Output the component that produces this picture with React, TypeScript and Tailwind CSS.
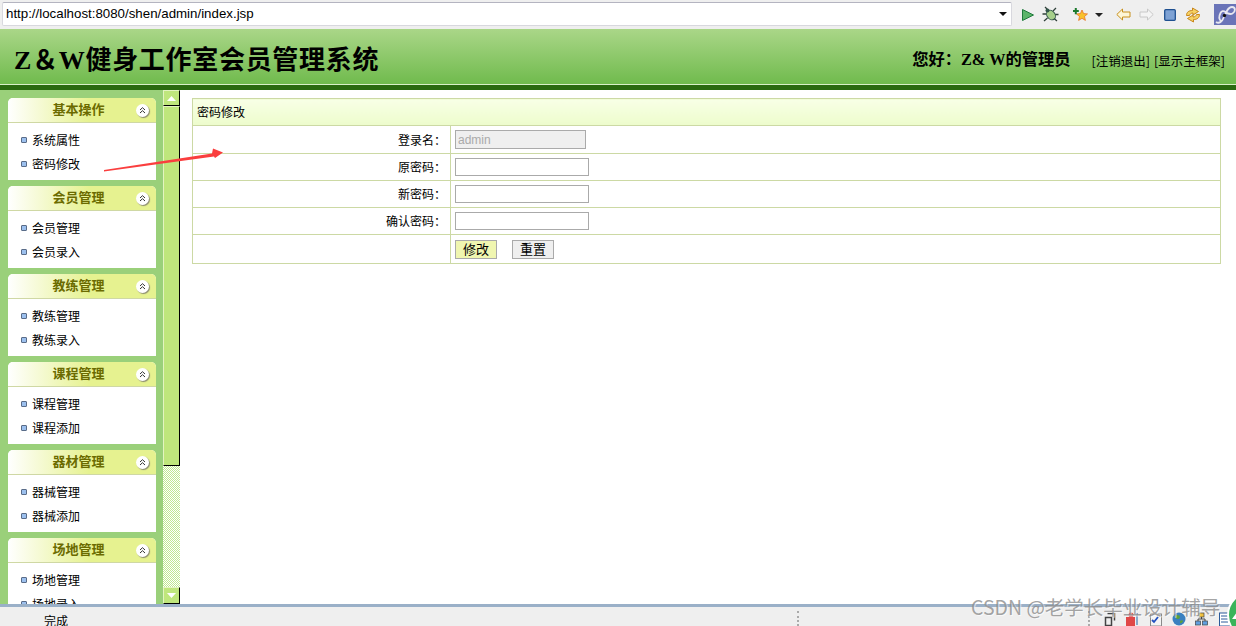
import React from 'react';

const menus = [
  { title: '基本操作', items: ['系统属性', '密码修改'] },
  { title: '会员管理', items: ['会员管理', '会员录入'] },
  { title: '教练管理', items: ['教练管理', '教练录入'] },
  { title: '课程管理', items: ['课程管理', '课程添加'] },
  { title: '器材管理', items: ['器械管理', '器械添加'] },
  { title: '场地管理', items: ['场地管理', '场地录入'] },
];

const fields = ['原密码：', '新密码：', '确认密码：'];

const cellBorder = 'border border-[#ccd9a4]';
const scrollPiece = 'shrink-0 bg-[#bfe67c] border border-t-[#e4f4c0] border-l-[#e4f4c0] border-r-black border-b-black';

const Toolbar = () => (
  <div className="h-[29px] shrink-0 flex items-start bg-[#efefef] pl-[2px]">
    <div className="mt-[2px] w-[1010px] h-[24px] bg-white border border-[#d8d8de] border-t-[#b4b4c0] rounded-[2px] flex items-center pl-[3px] pr-[4px] justify-between">
      <span className="text-[13.3px] text-black font-['Liberation_Sans',sans-serif]">http://localhost:8080/shen/admin/index.jsp</span>
      <svg width="8" height="4" viewBox="0 0 8 4"><path d="M0 0h8L4 4z" fill="#111" /></svg>
    </div>
    <div className="flex items-center h-[29px]">
      {/* run */}
      <svg className="ml-[9px]" width="14" height="14" viewBox="0 0 14 14"><path d="M1.500 1.500v11L12.500 7z" fill="#5cb56a" stroke="#1f7a3c" /></svg>
      {/* debug */}
      <svg className="ml-[7px]" width="17" height="17" viewBox="0 0 17 17">
        <path d="M3 1l3.500 3.500M14 2l-3 3M.5 8h4M16.500 8.500h-4M2 15l3.500-3M15 15l-3.500-3" stroke="#30403a" strokeWidth="1.300" fill="none" />
        <ellipse cx="9" cy="9" rx="4" ry="5.200" transform="rotate(-35 9 9)" fill="#a6cf8a" stroke="#33564a" />
        <circle cx="5.500" cy="4.500" r="2" fill="#33564a" />
      </svg>
      {/* new + star */}
      <svg className="ml-[13px]" width="16" height="16" viewBox="0 0 16 16">
        <path d="M10 3l1.600 3.600 3.900.3-3 2.600.9 3.900L10 11.300 6.600 13.400l.9-3.900-3-2.600 3.900-.3z" fill="#f8c22c" stroke="#e8742a" strokeWidth="0.800" />
        <path d="M3.800 1v6.200M1 4h5.800" stroke="#1c7a2c" strokeWidth="2" />
      </svg>
      <svg className="ml-[7px]" width="8" height="4" viewBox="0 0 8 4"><path d="M0 0h8L4 4z" fill="#222" /></svg>
      {/* back / forward */}
      <svg className="ml-[13px]" width="15" height="13" viewBox="0 0 15 13"><path d="M.8 6.500L6.500 1v3h7.500v5H6.500v3z" fill="#fdf6d8" stroke="#c8901c" /></svg>
      <svg className="ml-[8px]" width="15" height="13" viewBox="0 0 15 13"><path d="M14.200 6.500L8.500 1v3H1v5h7.500v3z" fill="#f4f4f4" stroke="#c8c8c8" /></svg>
      {/* stop */}
      <svg className="ml-[10px]" width="12" height="12" viewBox="0 0 12 12"><rect x="0.700" y="0.700" width="10.600" height="10.600" rx="1" fill="#7ea2d4" stroke="#1f5090" strokeWidth="1.300" /></svg>
      {/* sync */}
      <svg className="ml-[9px]" width="16" height="16" viewBox="0 0 16 16">
        <path d="M1.500 8.500C1.500 5 4 3.500 7.500 3.500V1l6 3.500L8 8V6C6 6 5 7 4.500 8.500z" fill="#f6d264" stroke="#c8861c" />
        <path d="M1.500 8.500C1.500 5 4 3.500 7.500 3.500V1l6 3.500L8 8V6C6 6 5 7 4.500 8.500z" fill="#f6d264" stroke="#c8861c" transform="rotate(180 8 8)" />
      </svg>
      {/* perspective logo */}
      <svg className="ml-[13px]" width="22" height="21" viewBox="0 0 22 21">
        <rect width="22" height="21" fill="#6a74b8" />
        <path d="M2 18c3 2 6 0 8-5s4-10 8-10 3.500 5 .5 6.500-5 0-7-1.500-4-1-5 1-2 6 .5 8" fill="none" stroke="#e8e8f0" strokeWidth="1.800" />
        <circle cx="10.500" cy="11.500" r="1.700" fill="#111" />
      </svg>
    </div>
  </div>
);

const Header = () => (
  <div className="h-[61px] shrink-0 border-b-[5px] border-[#2a6a10] bg-[linear-gradient(to_bottom,#aad688,#6fba4c)] flex items-center justify-between pt-[8px] pl-[14px] pr-[11px] shadow-[inset_0_-1px_0_#d8f0c8] font-['Liberation_Serif','Noto_Sans_CJK_SC',serif] text-black">
    <h1 className="text-[26px] font-bold tracking-[0.7px] leading-none">Z＆W健身工作室会员管理系统</h1>
    <div className="flex items-center">
      <span className="mb-[2px] text-[16.3px] font-bold whitespace-pre">您好：Z&amp; W的管理员</span>
      <span className="ml-[21px] text-[12.5px] font-['Noto_Sans_CJK_SC',sans-serif]">[注销退出]</span>
      <span className="ml-[4px] text-[12.5px] font-['Noto_Sans_CJK_SC',sans-serif]">[显示主框架]</span>
    </div>
  </div>
);

const Panel = ({ title, items }: { title: string; items: string[] }) => (
  <div className="shrink-0 h-[82px] w-[148px] rounded-t-[5px] bg-white overflow-hidden">
    <div className="h-[25px] flex items-center border-b border-[#cfd8a4] bg-[linear-gradient(to_right,#ffffff,#e6f290_55%)]">
      <span className="flex-1 pl-[13px] pb-[2px] text-center text-[13px] font-bold text-[#6b6b00]">{title}</span>
      <span className="mr-[7px] w-[13px] h-[13px] rounded-full bg-white shadow-[1px_1px_1px_#8a8a70] flex items-center justify-center">
        <svg width="7" height="7" viewBox="0 0 7 7"><path d="M1 3l2.500-2.300L6 3M1 6l2.500-2.300L6 6" fill="none" stroke="#333" /></svg>
      </span>
    </div>
    <ul className="pt-[5px]">
      {items.map((it) => (
        <li key={it} className="h-[24px] flex items-center text-[12px] text-black pl-[13px]">
          <span className="w-[6px] h-[6px] rounded-[1px] bg-[#9cc0ee] border border-[#5a6c88] mr-[5px]" />
          {it}
        </li>
      ))}
    </ul>
  </div>
);

const Sidebar = () => (
  <div className="w-[163px] shrink-0 bg-[#9ad07a] pl-[8px] pt-[8px] flex flex-col gap-[6px] overflow-hidden">
    {menus.map((m) => <Panel key={m.title} title={m.title} items={m.items} />)}
  </div>
);

const Scrollbar = () => (
  <div className="w-[17px] shrink-0 flex flex-col bg-[repeating-conic-gradient(#c0e890_0_25%,#ffffff_0_50%)] bg-[length:2px_2px]">
    <div className={`h-[16px] ${scrollPiece} flex items-center justify-center`}>
      <svg width="9" height="5" viewBox="0 0 9 5"><path d="M0 5h9L4.500 0z" fill="#fff" /></svg>
    </div>
    <div className={`h-[360px] ${scrollPiece}`} />
    <div className="flex-1" />
    <div className={`h-[17px] ${scrollPiece} flex items-center justify-center`}>
      <svg width="9" height="5" viewBox="0 0 9 5"><path d="M0 0h9L4.500 5z" fill="#fff" /></svg>
    </div>
  </div>
);

const PasswordForm = () => (
  <div className="flex-1 bg-white pt-[8px] pl-[12px] pr-[15px]">
    <table className="w-full border-collapse table-fixed text-[12px] text-black">
      <colgroup>
        <col className="w-[258px]" />
        <col />
      </colgroup>
      <tbody>
        <tr className="h-[27px]">
          <td colSpan={2} className={`${cellBorder} pl-[4px] bg-[linear-gradient(to_bottom,#f8ffe6,#edfccc)]`}>密码修改</td>
        </tr>
        <tr className="h-[28px]">
          <td className={`${cellBorder} text-right pr-[4px]`}>登录名：</td>
          <td className={`${cellBorder} pl-[4px]`}>
            <input disabled value="admin" readOnly className="block w-[131px] h-[19px] border border-[#aaaaaa] bg-[#efefef] px-[2px] text-[12px] text-[#aaaaaa] font-['Liberation_Sans',sans-serif]" />
          </td>
        </tr>
        {fields.map((f) => (
          <tr key={f} className="h-[27px]">
            <td className={`${cellBorder} text-right pr-[4px]`}>{f}</td>
            <td className={`${cellBorder} pl-[4px]`}>
              <input className="block w-[134px] h-[18px] border border-[#aaaaaa] bg-white" />
            </td>
          </tr>
        ))}
        <tr className="h-[29px]">
          <td className={cellBorder} />
          <td className={`${cellBorder} pl-[4px]`}>
            <div className="flex gap-[15px]">
              <button className="w-[42px] h-[19px] pb-[2px] border border-[#aaaaaa] bg-[#f0f6b0] text-[13px] leading-none text-black">修改</button>
              <button className="w-[42px] h-[19px] pb-[2px] border border-[#aaaaaa] bg-[#efefef] text-[13px] leading-none text-black">重置</button>
            </div>
          </td>
        </tr>
      </tbody>
    </table>
  </div>
);

const StatusBar = () => (
  <div className="h-[22px] shrink-0 border-t-[3px] border-[#9ab0c8] bg-[#efefef] relative flex items-start overflow-hidden">
    <span className="ml-[44px] mt-[6px] text-[12px] leading-[16px] text-black">完成</span>
    <span className="ml-[729px] mt-[4px] h-[15px] border-l-2 border-dotted border-[#aaaaaa]" />
    <span className="ml-[289px] mt-[4px] h-[15px] border-l-2 border-dotted border-[#aaaaaa]" />
    <div className="ml-[14px] mt-[5px] flex items-start">
      <svg width="12" height="14" viewBox="0 0 12 14"><path d="M3.500 1.500h7v7M1.500 5.500h6v8h-6z" fill="none" stroke="#444" strokeWidth="1.500" /></svg>
      <svg className="ml-[9px]" width="16" height="14" viewBox="0 0 16 14"><rect x="1" y="5" width="9" height="9" fill="#e04848" /><circle cx="6" cy="3" r="2.500" fill="#e04848" /><path d="M12 1v12" stroke="#88aacc" strokeWidth="2" /></svg>
      <svg className="ml-[8px]" width="14" height="14" viewBox="0 0 14 14"><rect x="1.500" y="2" width="11" height="12" fill="#f4f4f4" stroke="#8a8a8a" /><path d="M3 8l2 2 4-5" stroke="#2050c0" strokeWidth="1.800" fill="none" /></svg>
      <svg className="ml-[9px]" width="14" height="14" viewBox="0 0 14 14"><circle cx="7" cy="7" r="6.500" fill="#3a80c0" /><path d="M3 4c2-2 5-1 5 1s-3 3-4 1zM8 9c1-1 3-1 3 0s-2 3-3 2z" fill="#5aa040" /></svg>
      <svg className="ml-[9px]" width="13" height="14" viewBox="0 0 13 14"><rect x="4" y="1" width="5" height="4" fill="#f0c040" stroke="#444" strokeWidth="0.700" /><rect x="0.500" y="9" width="5" height="4" fill="#60a0e0" stroke="#444" strokeWidth="0.700" /><rect x="7.500" y="9" width="5" height="4" fill="#60a0e0" stroke="#444" strokeWidth="0.700" /><path d="M6.500 5v2M3 9V7h7v2" stroke="#444" fill="none" /></svg>
      <svg className="ml-[11px]" width="11" height="14" viewBox="0 0 11 14"><rect x="0.500" y="1" width="10" height="13" fill="#ffffff" stroke="#2a5a9a" /><path d="M2 4h7M2 7h7M2 10h7" stroke="#2a5a9a" /></svg>
    </div>
  </div>
);

export default function App() {
  return (
    <div className="relative w-[1236px] h-[626px] overflow-hidden flex flex-col bg-white font-['Noto_Sans_CJK_SC','Liberation_Sans',sans-serif]">
      <Toolbar />
      <Header />
      <div className="flex-1 flex min-h-0">
        <Sidebar />
        <Scrollbar />
        <PasswordForm />
      </div>
      <StatusBar />

      {/* annotation arrow */}
      <svg className="absolute left-[100px] top-[145px]" width="128" height="30" viewBox="0 0 128 30">
        <path d="M4 25L112 8.500l1-5 10 4-8 5.500-1-1.500L4 26.500z" fill="#fa3e3e" />
      </svg>

      {/* corner badge */}
      <div className="absolute left-[1227px] top-[591px] w-[48px] h-[48px] rounded-full bg-[#3ab45a] border-2 border-white">
        <svg className="absolute left-[3px] top-[18px]" width="10" height="8" viewBox="0 0 10 8"><path d="M0 8L5 1l5 7z" fill="#fff" /></svg>
      </div>

      {/* watermark */}
      <span className="absolute left-[971px] top-[595px] text-[19.500px] leading-[24px] whitespace-nowrap text-[#8c8c8c]/80 [text-shadow:1px_1px_0_rgba(255,255,255,0.6)]">CSDN @老学长毕业设计辅导</span>
    </div>
  );
}
